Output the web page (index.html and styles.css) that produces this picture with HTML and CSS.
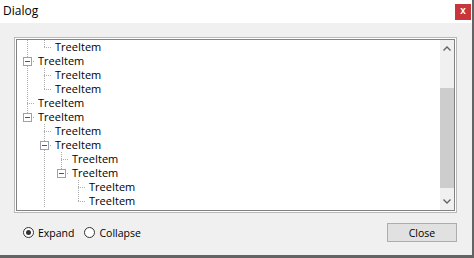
FILE: index.html
```html
<!DOCTYPE html>
<html>
<head>
<meta charset="utf-8">
<link rel="stylesheet" href="styles.css">
</head>
<body>
<div class="window">
  <div class="titlebar">
    <span class="title">Dialog</span>
    <span class="close-x">x</span>
  </div>
  <div class="content">
    <div class="treebox">
      <div class="tree-inner">
        <div class="tree">
          <div class="row"><span class="cell v"></span><span class="cell elbow"></span><span class="label">TreeItem</span></div>
          <div class="row"><span class="cell tee"><span class="box"></span></span><span class="label">TreeItem</span></div>
          <div class="row"><span class="cell v"></span><span class="cell tee"></span><span class="label">TreeItem</span></div>
          <div class="row"><span class="cell v"></span><span class="cell elbow"></span><span class="label">TreeItem</span></div>
          <div class="row"><span class="cell tee"></span><span class="label">TreeItem</span></div>
          <div class="row"><span class="cell elbow"><span class="box"></span></span><span class="label">TreeItem</span></div>
          <div class="row"><span class="cell"></span><span class="cell tee"></span><span class="label">TreeItem</span></div>
          <div class="row"><span class="cell"></span><span class="cell tee"><span class="box"></span></span><span class="label">TreeItem</span></div>
          <div class="row"><span class="cell"></span><span class="cell v"></span><span class="cell tee"></span><span class="label">TreeItem</span></div>
          <div class="row"><span class="cell"></span><span class="cell v"></span><span class="cell elbow"><span class="box"></span></span><span class="label">TreeItem</span></div>
          <div class="row"><span class="cell"></span><span class="cell v"></span><span class="cell"></span><span class="cell tee"></span><span class="label">TreeItem</span></div>
          <div class="row"><span class="cell"></span><span class="cell v"></span><span class="cell"></span><span class="cell elbow"></span><span class="label">TreeItem</span></div>
        </div>
        <div class="scrollbar">
          <div class="sb-btn">
            <svg width="8" height="5" viewBox="0 0 8 5"><path d="M0.5 4.5 L4 1 L7.5 4.5" fill="none" stroke="#606060" stroke-width="1.3"/></svg>
          </div>
          <div class="sb-track"><div class="sb-thumb"></div></div>
          <div class="sb-btn">
            <svg width="8" height="5" viewBox="0 0 8 5"><path d="M0.5 0.5 L4 4 L7.5 0.5" fill="none" stroke="#606060" stroke-width="1.3"/></svg>
          </div>
        </div>
      </div>
    </div>
    <div class="footer">
      <label class="radio"><span class="circle checked"></span><span>Expand</span></label>
      <label class="radio"><span class="circle"></span><span>Collapse</span></label>
      <span class="button">Close</span>
    </div>
  </div>
</div>
</body>
</html>
```
FILE: styles.css
```css
html, body {
  margin: 0;
  padding: 0;
}
body {
  width: 474px;
  height: 258px;
  overflow: hidden;
  font-family: "Open Sans", "Liberation Sans", sans-serif;
  font-size: 11px;
  color: #000;
}
.window {
  width: 472px;
  height: 255px;
  background: #f0f0f0;
  border-right: 2px solid #646464;
  border-bottom: 3px solid #646464;
  display: flex;
  flex-direction: column;
}
.titlebar {
  height: 23px;
  background: #fff;
  display: flex;
  align-items: flex-start;
  flex: none;
}
.title {
  font-size: 12px;
  margin: 3px 0 0 3px;
  line-height: 16px;
}
.close-x {
  margin: 4px 1px 0 auto;
  width: 16px;
  height: 16px;
  background: #c8363b;
  color: #fff;
  font-size: 10px;
  line-height: 14px;
  text-align: center;
  font-weight: bold;
  font-family: "Liberation Sans", sans-serif;
}
.content {
  flex: 1;
  display: flex;
  flex-direction: column;
  padding: 14px 15px 0 14px;
}
.treebox {
  height: 176px;
  border: 1px solid #b9b9b9;
  padding: 1px;
  background: #fff;
  box-sizing: border-box;
  flex: none;
}
.tree-inner {
  height: 100%;
  box-sizing: border-box;
  border: 1px solid #828282;
  background: #fff;
  display: flex;
  overflow: hidden;
}
.tree {
  flex: 1;
}
.row {
  display: flex;
  height: 14px;
  align-items: center;
}
.cell {
  width: 17px;
  height: 14px;
  flex: none;
  display: flex;
  align-items: center;
  background-repeat: no-repeat;
}
.cell.v {
  background-image: repeating-linear-gradient(to bottom, #adadad 0 1px, transparent 1px 2px);
  background-position: 10px 0;
  background-size: 1px 14px;
}
.cell.tee {
  background-image:
    repeating-linear-gradient(to bottom, #adadad 0 1px, transparent 1px 2px),
    repeating-linear-gradient(to right, #adadad 0 1px, transparent 1px 2px);
  background-position: 10px 0, 10px 7px;
  background-size: 1px 14px, 8px 1px;
}
.cell.elbow {
  background-image:
    repeating-linear-gradient(to bottom, #adadad 0 1px, transparent 1px 2px),
    repeating-linear-gradient(to right, #adadad 0 1px, transparent 1px 2px);
  background-position: 10px 0, 10px 7px;
  background-size: 1px 8px, 8px 1px;
}
.box {
  width: 7px;
  height: 7px;
  margin-left: 6px;
  margin-top: 1px;
  border: 1px solid #9aa3ad;
  background: #fff linear-gradient(#555, #555) no-repeat center / 5px 1px;
}
.label {
  padding-left: 4px;
  white-space: nowrap;
  line-height: 14px;
}
.scrollbar {
  width: 14px;
  background: #f0f0f0;
  display: flex;
  flex-direction: column;
  flex: none;
}
.sb-btn {
  height: 17px;
  display: flex;
  align-items: center;
  justify-content: center;
  flex: none;
}
.sb-track {
  flex: 1;
  padding-top: 31px;
}
.sb-thumb {
  height: 100px;
  background: #cdcdcd;
}
.footer {
  margin-top: 10px;
  height: 19px;
  display: flex;
  align-items: center;
  padding-left: 9px;
  font-size: 10.5px;
}
.radio {
  display: flex;
  align-items: center;
  margin-right: 10px;
}
.circle {
  width: 11px;
  height: 11px;
  box-sizing: border-box;
  border: 1px solid #333;
  border-radius: 50%;
  background: #fff;
  margin-right: 4px;
  display: flex;
  align-items: center;
  justify-content: center;
}
.circle.checked::after {
  content: "";
  width: 5px;
  height: 5px;
  border-radius: 50%;
  background: #333;
}
.button {
  margin-left: auto;
  width: 70px;
  height: 19px;
  box-sizing: border-box;
  border: 1px solid #adadad;
  background: #e1e1e1;
  display: flex;
  align-items: center;
  justify-content: center;
}
```
